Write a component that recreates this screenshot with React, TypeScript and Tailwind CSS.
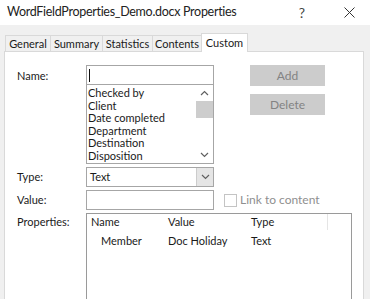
import React from "react";

const tabs = [
  { t: "General", w: "w-[45px]" },
  { t: "Summary", w: "w-[52px]" },
  { t: "Statistics", w: "w-[50px]" },
  { t: "Contents", w: "w-[49px]" },
];
const names = ["Checked by", "Client", "Date completed", "Department", "Destination", "Disposition"];

function Chevron({ up }: { up?: boolean }) {
  return (
    <svg width="9" height="6" viewBox="0 0 9 6" className="block">
      <path d={up ? "M1 5 L4.5 1.5 L8 5" : "M1 1 L4.5 4.5 L8 1"} fill="none" stroke="#606060" strokeWidth="1.2" />
    </svg>
  );
}

export default function App() {
  return (
    <div
      className="w-[370px] h-[299px] overflow-hidden bg-[#f0f0f0] flex flex-col text-[11px] text-[#1a1a1a]"
      style={{ fontFamily: 'Lato, "Noto Sans", sans-serif' }}
    >
      {/* title bar */}
      <div className="h-[25px] bg-white flex items-center shrink-0">
        <span className="pl-[7px] text-[12.5px] tracking-[-0.3px] text-[#222] leading-none">
          WordFieldProperties_Demo.docx Properties
        </span>
        <span className="ml-auto text-[14px] text-[#444] leading-none">?</span>
        <svg width="11" height="11" viewBox="0 0 11 11" className="ml-[39px] mr-[15px]">
          <path d="M0.5 0.5 L10.5 10.5 M10.5 0.5 L0.5 10.5" stroke="#333" strokeWidth="1" />
        </svg>
      </div>

      {/* tabs */}
      <div className="flex items-end pl-[5px] pt-[8px] h-[26px] shrink-0">
        {tabs.map(({ t, w }) => (
          <div
            key={t}
            className={`${w} h-[16px] bg-[#f0f0f0] border border-r-0 border-b-0 border-[#d9d9d9] flex items-center justify-center leading-none`}
          >
            {t}
          </div>
        ))}
        <div className="w-[47px] h-[19px] bg-white border border-b-0 border-[#d9d9d9] -mb-px relative z-10 flex justify-center pt-[2px] leading-[14px]">
          Custom
        </div>
      </div>

      {/* panel */}
      <div className="ml-[4px] w-[360px] flex-1 bg-white border border-[#d9d9d9] pl-[12px] pt-[13px]">
        <div className="flex">
          <div className="w-[69px] pt-[5px] leading-none">Name:</div>
          <div className="w-[128px] flex flex-col">
            <div className="h-[20px] border border-[#a6a6a6] flex items-center pl-[2px]">
              <div className="w-px h-[13px] bg-[#111]" />
            </div>
            <div className="h-[80px] -mt-px border border-[#a6a6a6] flex">
              <div className="flex-1 pl-[1px] pt-[2px] leading-[12.6px] overflow-hidden">
                {names.map((n) => (
                  <div key={n} className="h-[12.6px] whitespace-nowrap">{n}</div>
                ))}
              </div>
              <div className="w-[17px] flex flex-col items-center bg-white">
                <div className="h-[16px] flex items-center">
                  <Chevron up />
                </div>
                <div className="w-[17px] h-[17px] bg-[#cdcdcd]" />
                <div className="flex-1" />
                <div className="h-[16px] flex items-center">
                  <Chevron />
                </div>
              </div>
            </div>
          </div>
          <div className="ml-[36px] flex flex-col gap-[8px]">
            <div className="w-[75px] h-[21px] bg-[#cccccc] text-[#838383] text-[12px] flex items-center justify-center">Add</div>
            <div className="w-[75px] h-[21px] bg-[#cccccc] text-[#838383] text-[12px] flex items-center justify-center">Delete</div>
          </div>
        </div>

        <div className="flex items-center mt-[3px]">
          <div className="w-[69px]">Type:</div>
          <div className="w-[128px] h-[20px] border border-[#a6a6a6] flex items-center">
            <span className="flex-1 pl-[3px]">Text</span>
            <div className="w-[17px] h-[18px] bg-[#e5e5e5] border-l border-[#cccccc] flex items-center justify-center">
              <Chevron />
            </div>
          </div>
        </div>

        <div className="flex items-center mt-[3px]">
          <div className="w-[69px]">Value:</div>
          <div className="w-[128px] h-[20px] border border-[#a6a6a6]" />
          <div className="ml-[10px] w-[13px] h-[13px] border border-[#c4c4c4]" />
          <span className="ml-[3px] text-[#8f8f8f] text-[12px]">Link to content</span>
        </div>

        <div className="flex mt-[3px]">
          <div className="w-[69px] pt-[1px]">Properties:</div>
          <div className="w-[266px] h-[100px] border border-[#9a9a9a]">
            <div className="flex h-[16px] items-center">
              <span className="w-[81px] pl-[4px]">Name</span>
              <span className="w-[83px]">Value</span>
              <span className="w-[77px] h-full flex items-center border-r border-[#e5e5e5]">Type</span>
            </div>
            <div className="flex h-[22px] items-center">
              <span className="w-[81px] pl-[14px]">Member</span>
              <span className="w-[83px]">Doc Holiday</span>
              <span>Text</span>
            </div>
          </div>
        </div>
      </div>
    </div>
  );
}
